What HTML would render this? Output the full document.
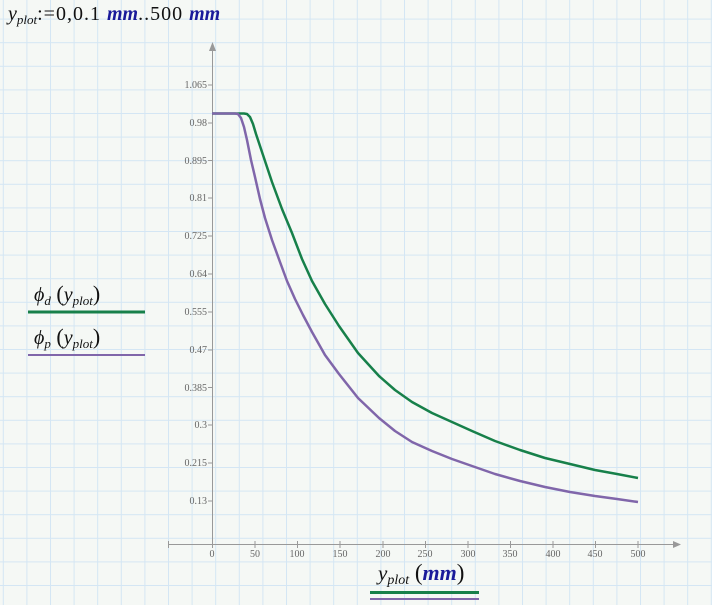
<!DOCTYPE html>
<html><head><meta charset="utf-8"><style>
html,body{margin:0;padding:0;width:712px;height:605px;overflow:hidden;background:#f5f8f5;}
svg{display:block}
.t{font-family:"Liberation Serif",serif;font-size:10px;fill:#666;}
.m{font-family:"Liberation Serif",serif;font-style:italic;fill:#111;}
.u{font-family:"Liberation Serif",serif;font-style:italic;font-weight:bold;fill:#1a1a9a;}
.n{font-family:"Liberation Serif",serif;fill:#111;}
</style></head><body>
<svg width="712" height="605" xmlns="http://www.w3.org/2000/svg">
<defs><pattern id="g" x="2.8" y="18.6" width="23.6" height="23.6" patternUnits="userSpaceOnUse">
<path d="M0.5 0V23.6M0 0.5H23.6" stroke="#d4e6f4" stroke-width="1" fill="none"/></pattern></defs>
<rect width="712" height="605" fill="url(#g)"/>
<text x="8" y="20" font-size="20"><tspan class="m">y</tspan><tspan class="m" font-size="13" dy="4">plot</tspan><tspan class="n" dy="-4" letter-spacing="1">:=0,0.1 </tspan><tspan class="u">mm</tspan><tspan class="n" letter-spacing="1">..500 </tspan><tspan class="u">mm</tspan></text>
<g stroke="#999" stroke-width="1" fill="none">
<line x1="212.5" y1="48" x2="212.5" y2="545"/>
<line x1="168" y1="544.5" x2="674" y2="544.5"/>
</g>
<path d="M212.5 42 L209 51 L216 51Z" fill="#999"/>
<path d="M681 544.5 L673 541 L673 548Z" fill="#999"/>
<g stroke="#999">
<line x1="168.5" y1="541" x2="168.5" y2="548"/>
<line x1="212.5" y1="541" x2="212.5" y2="548"/><line x1="255" y1="541" x2="255" y2="548"/><line x1="297.5" y1="541" x2="297.5" y2="548"/><line x1="340" y1="541" x2="340" y2="548"/><line x1="383" y1="541" x2="383" y2="548"/><line x1="425.5" y1="541" x2="425.5" y2="548"/><line x1="468" y1="541" x2="468" y2="548"/><line x1="510.5" y1="541" x2="510.5" y2="548"/><line x1="553" y1="541" x2="553" y2="548"/><line x1="595.5" y1="541" x2="595.5" y2="548"/><line x1="638" y1="541" x2="638" y2="548"/>
</g>
<g class="t" text-anchor="middle">
<text x="212" y="557">0</text><text x="255" y="557">50</text><text x="297" y="557">100</text><text x="340" y="557">150</text><text x="383" y="557">200</text><text x="425" y="557">250</text><text x="468" y="557">300</text><text x="510" y="557">350</text><text x="553" y="557">400</text><text x="595" y="557">450</text><text x="638" y="557">500</text>
</g>
<g class="t" text-anchor="end">
<text x="207" y="88">1.065</text><text x="207" y="126">0.98</text><text x="207" y="164">0.895</text><text x="207" y="201">0.81</text><text x="207" y="239">0.725</text><text x="207" y="277">0.64</text><text x="207" y="315">0.555</text><text x="207" y="353">0.47</text><text x="207" y="391">0.385</text><text x="207" y="428">0.3</text><text x="207" y="466">0.215</text><text x="207" y="504">0.13</text>
</g>
<g stroke="#999">
<line x1="208" y1="85" x2="212" y2="85"/><line x1="208" y1="123" x2="212" y2="123"/><line x1="208" y1="160.5" x2="212" y2="160.5"/><line x1="208" y1="198" x2="212" y2="198"/><line x1="208" y1="236" x2="212" y2="236"/><line x1="208" y1="274" x2="212" y2="274"/><line x1="208" y1="312" x2="212" y2="312"/><line x1="208" y1="350" x2="212" y2="350"/><line x1="208" y1="387.5" x2="212" y2="387.5"/><line x1="208" y1="425" x2="212" y2="425"/><line x1="208" y1="463" x2="212" y2="463"/><line x1="208" y1="501" x2="212" y2="501"/>
</g>
<polyline points="212,113.5 244,113.5 247,114 250,117 253,124 256,134 263,155 272,182 282,209 292,233 302,259 312,281 325,304 339,326 358,353 379,376 395,390 412,402 432,413 452,422 472,431 495,441 520,450 545,458 570,464 595,470 617,474 638,478" stroke="#17804a" stroke-width="2.5" fill="none" stroke-linejoin="round"/>
<polyline points="212,113.5 235,113.5 238,114 241,118 244,127 247,140 251,160 255,177 260,199 265,218 272,240 280,262 287,281 295,299 303,315 312,332 325,355 339,374 358,398 379,418 395,431 412,442 432,451 452,459 472,466 495,474 520,481 545,487 570,492 595,496 617,499 638,502" stroke="#8066aa" stroke-width="2.5" fill="none" stroke-linejoin="round"/>
<text x="34" y="301" font-size="20"><tspan class="m">ϕ</tspan><tspan class="m" font-size="13" dy="4">d</tspan><tspan class="n" dy="-4" font-size="22"> (</tspan><tspan class="m">y</tspan><tspan class="m" font-size="13" dy="4">plot</tspan><tspan class="n" dy="-4" font-size="22">)</tspan></text>
<rect x="28" y="310.5" width="117" height="3" fill="#17804a"/>
<text x="34" y="344" font-size="20"><tspan class="m">ϕ</tspan><tspan class="m" font-size="13" dy="4">p</tspan><tspan class="n" dy="-4" font-size="22"> (</tspan><tspan class="m">y</tspan><tspan class="m" font-size="13" dy="4">plot</tspan><tspan class="n" dy="-4" font-size="22">)</tspan></text>
<rect x="28" y="354" width="117" height="2" fill="#8066aa"/>
<text x="378" y="580" font-size="21"><tspan class="m">y</tspan><tspan class="m" font-size="14" dy="4">plot</tspan><tspan class="n" dy="-4" font-size="23">  (</tspan><tspan class="u" font-size="22">mm</tspan><tspan class="n" font-size="23">)</tspan></text>
<rect x="370" y="591" width="109" height="3" fill="#17804a"/>
<rect x="370" y="598" width="109" height="2" fill="#8066aa"/>
</svg>
</body></html>
